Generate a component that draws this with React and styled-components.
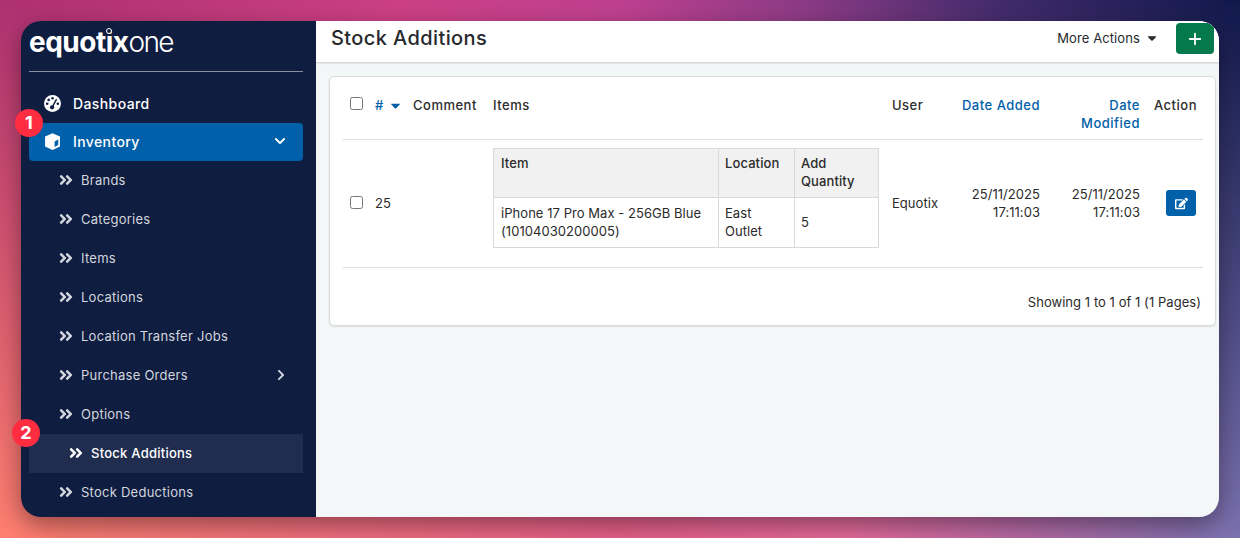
import React from 'react';
import styled, {createGlobalStyle} from 'styled-components';
import {
  FaChevronDown,
  FaChevronRight,
  FaAngleDoubleRight,
  FaCaretDown,
  FaEdit
} from 'react-icons/fa';
import {Plus} from 'lucide-react';

const navy = '#0f1d40';
const blue = '#0060a9';

const GlobalStyle = createGlobalStyle`
  html, body {
    margin: 0;
    height: 100%;
    overflow: hidden;
  }
  body {
    font-family: Inter, "Noto Sans", "Liberation Sans", sans-serif;
    font-size: 13px;
    color: #2b2b2b;
  }
`;

const Backdrop = styled.div`
  position: relative;
  width: 1240px;
  height: 538px;
  box-sizing: border-box;
  padding: 21px;
  background: linear-gradient(90deg, #ff8070 0%, #e6608a 50%, #e56a9a 68%, #b86aa5 82%, #7a72b0 100%);

  &::before {
    content: '';
    position: absolute;
    inset: 0;
    background: linear-gradient(90deg, #ad3071 0%, #cc3f85 32%, #be4090 50%, #8a3a85 65%, #3f2a6a 81%, #10184a 100%);
    mask-image: linear-gradient(to bottom, #000 0%, rgba(0, 0, 0, 0.5) 50%, transparent 100%);
  }
`;

const Shell = styled.div`
  position: relative;
  display: flex;
  height: 496px;
  border-radius: 20px;
  box-shadow: 0 8px 24px rgba(0, 0, 0, 0.4);
`;

const Sidebar = styled.aside`
  flex: 0 0 295px;
  box-sizing: border-box;
  padding: 0 13px 0 8px;
  background: ${navy};
  border-radius: 20px 0 0 20px;
  color: #fff;
`;

const Logo = styled.div`
  display: flex;
  align-items: baseline;
  height: 51px;
  padding-top: 1px;
  box-sizing: border-box;
  font-size: 28px;
  line-height: 40px;
  border-bottom: 1px solid #8a8f9f;
`;

const LogoBold = styled.span`
  position: relative;
  font-weight: 700;
  letter-spacing: -0.5px;
`;

const LogoLight = styled.span`
  font-weight: 300;
  letter-spacing: -1.7px;
`;

const LogoRing = styled.i`
  position: absolute;
  right: 17px;
  top: 6px;
  width: 4px;
  height: 4px;
  border: 1px solid #fff;
  border-radius: 50%;
  background: ${navy};
`;

const Nav = styled.nav`
  display: flex;
  flex-direction: column;
  padding-top: 13px;
`;

const TopItem = styled.div`
  position: relative;
  display: flex;
  align-items: center;
  box-sizing: border-box;
  height: 38px;
  padding: 0 17px 2px 15px;
  border-radius: 4px;
  font-size: 14px;
  font-weight: 500;
  letter-spacing: 0.4px;
  background: ${props => (props.$active ? blue : 'transparent')};

  > svg:first-child {
    width: 17px;
    height: 17px;
    margin-right: 12px;
  }
`;

const SubItem = styled.div`
  position: relative;
  display: flex;
  align-items: center;
  box-sizing: border-box;
  height: 39px;
  padding: 0 16px 2px ${props => (props.$active ? '39px' : '29px')};
  font-size: 13px;
  font-weight: ${props => (props.$active ? 500 : 400)};
  letter-spacing: 0.25px;
  color: ${props => (props.$active ? '#fff' : '#d3d6de')};
  background: ${props => (props.$active ? '#212d4f' : 'transparent')};

  > svg:first-child {
    width: 16px;
    height: 16px;
    margin-right: 7px;
  }
`;

const ItemLabel = styled.span`
  flex: 1;
`;

const Badge = styled.span`
  position: absolute;
  left: ${props => props.$left}px;
  top: ${props => props.$top}px;
  width: 28px;
  height: 28px;
  border-radius: 50%;
  background: #ff2d3f;
  color: #fff;
  font-size: 18px;
  font-weight: 700;
  letter-spacing: 0;
  line-height: 28px;
  text-align: center;
`;

const Main = styled.main`
  flex: 1;
  min-width: 0;
  background: #f4f7f8;
  border-radius: 0 20px 20px 0;
  overflow: hidden;
`;

const Header = styled.header`
  display: flex;
  align-items: flex-start;
  justify-content: space-between;
  box-sizing: border-box;
  height: 41px;
  padding: 2px 5px 0 15px;
  background: #fff;
  box-shadow: 0 1px 2px rgba(0, 0, 0, 0.2);
`;

const Title = styled.h1`
  margin: 1px 0 0;
  font-size: 20px;
  line-height: 28px;
  font-weight: 500;
  letter-spacing: 0.4px;
  color: #26282c;
`;

const HeaderActions = styled.div`
  display: flex;
  align-items: center;
  gap: 17px;
`;

const MoreActions = styled.span`
  display: flex;
  align-items: center;
  gap: 5px;
  padding-bottom: 1px;
  font-size: 13px;
  letter-spacing: 0.1px;
  color: #26282c;

  svg {
    width: 14px;
    height: 14px;
  }
`;

const AddButton = styled.button`
  display: flex;
  align-items: center;
  justify-content: center;
  width: 38px;
  height: 31px;
  padding: 0;
  border: 0;
  border-radius: 4px;
  background: #047a4c;
  color: #fff;
`;

const Card = styled.section`
  margin: 14px 3px 0 13px;
  height: 250px;
  box-sizing: border-box;
  padding: 13px 13px 0;
  background: #fff;
  border: 1px solid #d9dbdc;
  border-radius: 5px;
  box-shadow: 0 1px 2px rgba(0, 0, 0, 0.1);
`;

const Table = styled.table`
  width: 860px;
  table-layout: fixed;
  border-collapse: collapse;
  font-size: 13px;
  line-height: 18px;
  letter-spacing: 0.05px;
`;

const Th = styled.th`
  height: 49px;
  box-sizing: border-box;
  padding: 6px 7px 0;
  border-bottom: 1px solid #dcdddd;
  font-weight: 500;
  letter-spacing: 0.5px;
  vertical-align: top;
  white-space: ${props => (props.$nowrap ? 'nowrap' : 'normal')};
  text-align: ${props => props.$align || 'left'};
  color: ${props => (props.$link ? blue : '#2b2b2b')};

  svg {
    width: 15px;
    height: 15px;
    vertical-align: -3px;
    margin-left: 4px;
  }
`;

const Td = styled.td`
  height: 128px;
  box-sizing: border-box;
  padding: ${props => (props.$top ? '8px 7px 0' : '0 7px')};
  border-bottom: 1px solid #dcdddd;
  vertical-align: ${props => (props.$top ? 'top' : 'middle')};
  text-align: ${props => props.$align || 'left'};
`;

const Check = styled.input.attrs({type: 'checkbox'})`
  display: block;
  width: 13px;
  height: 13px;
  margin: 1px 0 3px;
`;

const InnerTable = styled.table`
  width: 385px;
  table-layout: fixed;
  border-collapse: collapse;
`;

const InnerTh = styled.th`
  height: 49px;
  box-sizing: border-box;
  padding: 5px 7px;
  border: 1px solid #d9d9d9;
  background: #f1f1f1;
  font-weight: 500;
  letter-spacing: 0.1px;
  text-align: left;
  vertical-align: top;

  & + & {
    padding-left: 6px;
  }
`;

const InnerTd = styled.td`
  height: 50px;
  box-sizing: border-box;
  padding: 5px 7px;
  border: 1px solid #d9d9d9;
  vertical-align: middle;

  & + & {
    padding-left: 6px;
  }
`;

const EditButton = styled.button`
  display: flex;
  align-items: center;
  justify-content: center;
  width: 30px;
  height: 26px;
  margin-left: 12px;
  padding: 0;
  border: 0;
  border-radius: 3px;
  background: ${blue};
  color: #fff;

  svg {
    width: 13px;
    height: 13px;
  }
`;

const Pagination = styled.div`
  padding: 25px 1px 0 0;
  font-size: 13px;
  line-height: 18px;
  letter-spacing: 0.05px;
  text-align: right;
`;

const GaugeIcon = () => (
  <svg viewBox="0 0 16 16">
    <circle cx="8" cy="8" r="8" fill="#fff" />
    <g fill={navy}>
      <circle cx="8" cy="3" r="1.2" />
      <circle cx="4.4" cy="4.6" r="1.2" />
      <circle cx="3" cy="8.2" r="1.2" />
      <circle cx="13" cy="8.2" r="1.2" />
      <circle cx="7.6" cy="11.6" r="2" />
    </g>
    <path d="M7.6 11.6 11.6 4.4" stroke={navy} strokeWidth="1.3" strokeLinecap="round" />
  </svg>
);

const CubeIcon = () => (
  <svg viewBox="0 0 16 16">
    <path d="M8 .3 15 3.4v9.2L8 15.9 1 12.6V3.4z" fill="#fff" />
    <path d="M10 8l3.4-1.8v5.2L10 13.2z" fill={blue} />
  </svg>
);

const subItems = ['Brands', 'Categories', 'Items', 'Locations', 'Location Transfer Jobs'];

export default function App() {
  return (
    <Backdrop>
      <GlobalStyle />
      <Shell>
        <Sidebar>
          <Logo>
            <LogoBold>
              equotix
              <LogoRing />
            </LogoBold>
            <LogoLight>one</LogoLight>
          </Logo>
          <Nav>
            <TopItem>
              <GaugeIcon />
              <ItemLabel>Dashboard</ItemLabel>
            </TopItem>
            <TopItem $active>
              <CubeIcon />
              <ItemLabel>Inventory</ItemLabel>
              <FaChevronDown size={12} />
              <Badge $left={-14} $top={-14}>1</Badge>
            </TopItem>
            {subItems.map(label => (
              <SubItem key={label}>
                <FaAngleDoubleRight />
                <ItemLabel>{label}</ItemLabel>
              </SubItem>
            ))}
            <SubItem>
              <FaAngleDoubleRight />
              <ItemLabel>Purchase Orders</ItemLabel>
              <FaChevronRight size={12} />
            </SubItem>
            <SubItem>
              <FaAngleDoubleRight />
              <ItemLabel>Options</ItemLabel>
            </SubItem>
            <SubItem $active>
              <FaAngleDoubleRight />
              <ItemLabel>Stock Additions</ItemLabel>
              <Badge $left={-17} $top={-15}>2</Badge>
            </SubItem>
            <SubItem>
              <FaAngleDoubleRight />
              <ItemLabel>Stock Deductions</ItemLabel>
            </SubItem>
          </Nav>
        </Sidebar>
        <Main>
          <Header>
            <Title>Stock Additions</Title>
            <HeaderActions>
              <MoreActions>
                More Actions
                <FaCaretDown />
              </MoreActions>
              <AddButton>
                <Plus size={18} strokeWidth={2.4} />
              </AddButton>
            </HeaderActions>
          </Header>
          <Card>
            <Table>
              <colgroup>
                <col width="25" />
                <col width="38" />
                <col width="80" />
                <col width="399" />
                <col width="66" />
                <col width="96" />
                <col width="100" />
                <col width="56" />
              </colgroup>
              <thead>
                <tr>
                  <Th><Check /></Th>
                  <Th $link $nowrap>#<FaCaretDown /></Th>
                  <Th>Comment</Th>
                  <Th>Items</Th>
                  <Th>User</Th>
                  <Th $link $align="right">Date Added</Th>
                  <Th $link $align="right">Date Modified</Th>
                  <Th>Action</Th>
                </tr>
              </thead>
              <tbody>
                <tr>
                  <Td><Check /></Td>
                  <Td>25</Td>
                  <Td />
                  <Td $top>
                    <InnerTable>
                      <colgroup>
                        <col width="225" />
                        <col width="76" />
                        <col width="84" />
                      </colgroup>
                      <thead>
                        <tr>
                          <InnerTh>Item</InnerTh>
                          <InnerTh>Location</InnerTh>
                          <InnerTh>Add Quantity</InnerTh>
                        </tr>
                      </thead>
                      <tbody>
                        <tr>
                          <InnerTd>iPhone 17 Pro Max - 256GB Blue (10104030200005)</InnerTd>
                          <InnerTd>East Outlet</InnerTd>
                          <InnerTd>5</InnerTd>
                        </tr>
                      </tbody>
                    </InnerTable>
                  </Td>
                  <Td>Equotix</Td>
                  <Td $align="right">25/11/2025 17:11:03</Td>
                  <Td $align="right">25/11/2025 17:11:03</Td>
                  <Td>
                    <EditButton>
                      <FaEdit />
                    </EditButton>
                  </Td>
                </tr>
              </tbody>
            </Table>
            <Pagination>Showing 1 to 1 of 1 (1 Pages)</Pagination>
          </Card>
        </Main>
      </Shell>
    </Backdrop>
  );
}
